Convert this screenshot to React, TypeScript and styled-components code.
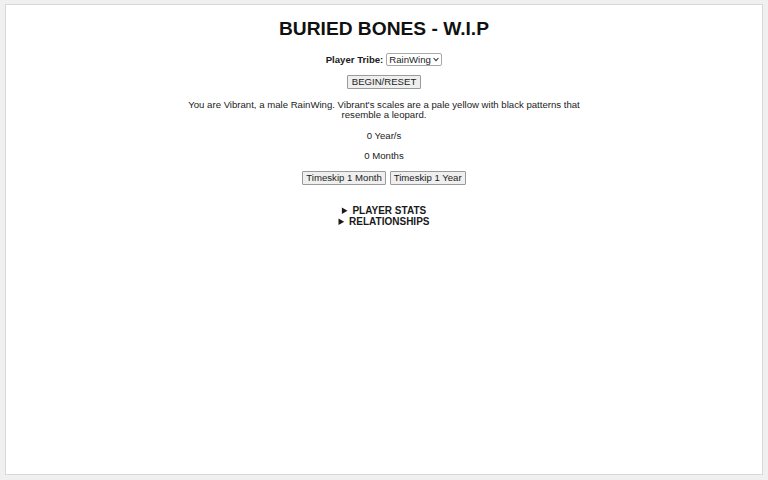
import React from "react";
import styled, { createGlobalStyle } from "styled-components";

const Global = createGlobalStyle`
  html, body {
    margin: 0;
    padding: 0;
    background: #f0f0f0;
  }
  body {
    padding: 4px 5px 4px 5px;
    font-family: "Liberation Sans", Arial, sans-serif;
    color: #1a1a1a;
  }
`;

const Panel = styled.main`
  background: #ffffff;
  border: 1px solid #d8d8d8;
  height: 471px;
  box-sizing: border-box;
  display: flex;
  flex-direction: column;
  align-items: center;
  text-align: center;
  font-size: 9.6px;
`;

const Title = styled.h1`
  margin: 13px 0 0;
  font-size: 19.2px;
  font-weight: bold;
  line-height: 22px;
  color: #111;
`;

const Row = styled.div<{ $top: number }>`
  margin-top: ${(p) => p.$top}px;
  display: flex;
  align-items: center;
  gap: 4px;
  line-height: 12px;
`;

const Label = styled.label`
  font-weight: bold;
  margin-right: -1px;
`;

const SelectWrap = styled.span`
  position: relative;
  display: inline-flex;
`;

const Select = styled.select`
  appearance: none;
  -webkit-appearance: none;
  font-family: "Liberation Sans", Arial, sans-serif;
  font-size: 9.6px;
  width: 56px;
  height: 13px;
  line-height: 11px;
  padding: 0 0 0 2px;
  border: 1px solid #a8a8a8;
  border-radius: 2px;
  background: #fff;
  color: #222;
`;

const Chevron = styled.svg`
  position: absolute;
  right: 3px;
  top: 4px;
  width: 6px;
  height: 5px;
  pointer-events: none;
`;

const Button = styled.button<{ $pad?: number }>`
  font-family: "Liberation Sans", Arial, sans-serif;
  font-size: 9.6px;
  height: 14px;
  line-height: 12px;
  padding: 0 ${(p) => p.$pad ?? 4}px;
  background: #efefef;
  border: 1px solid #9a9a9a;
  border-radius: 1px;
  color: #222;
`;

const Text = styled.p<{ $top: number }>`
  margin: ${(p) => p.$top}px 0 0;
  max-width: 400px;
  line-height: 10px;
  color: #222;
`;

const Section = styled.details<{ $top: number }>`
  margin-top: ${(p) => p.$top}px;
  line-height: 11px;
`;

const Summary = styled.summary`
  font-weight: bold;
  font-size: 10px;
  cursor: pointer;
`;

export default function App() {
  return (
    <>
      <Global />
      <Panel>
        <Title>BURIED BONES - W.I.P</Title>
        <Row $top={13}>
          <Label>Player Tribe:</Label>
          <SelectWrap>
            <Select defaultValue="RainWing">
              <option>RainWing</option>
              <option>MudWing</option>
              <option>SandWing</option>
              <option>SkyWing</option>
              <option>SeaWing</option>
              <option>IceWing</option>
              <option>NightWing</option>
            </Select>
            <Chevron viewBox="0 0 6 5">
              <path d="M0.6 1 L3 3.6 L5.4 1" fill="none" stroke="#333" strokeWidth="1.1" />
            </Chevron>
          </SelectWrap>
        </Row>
        <Row $top={9}>
          <Button>BEGIN/RESET</Button>
        </Row>
        <Text $top={11}>
          You are Vibrant, a male RainWing. Vibrant's scales are a pale yellow
          with black patterns that resemble a leopard.
        </Text>
        <Text $top={11}>0 Year/s</Text>
        <Text $top={10}>0 Months</Text>
        <Row $top={10}>
          <Button $pad={3}>Timeskip 1 Month</Button>
          <Button $pad={3}>Timeskip 1 Year</Button>
        </Row>
        <Section $top={20}>
          <Summary>PLAYER STATS</Summary>
        </Section>
        <Section $top={0}>
          <Summary>RELATIONSHIPS</Summary>
        </Section>
      </Panel>
    </>
  );
}
